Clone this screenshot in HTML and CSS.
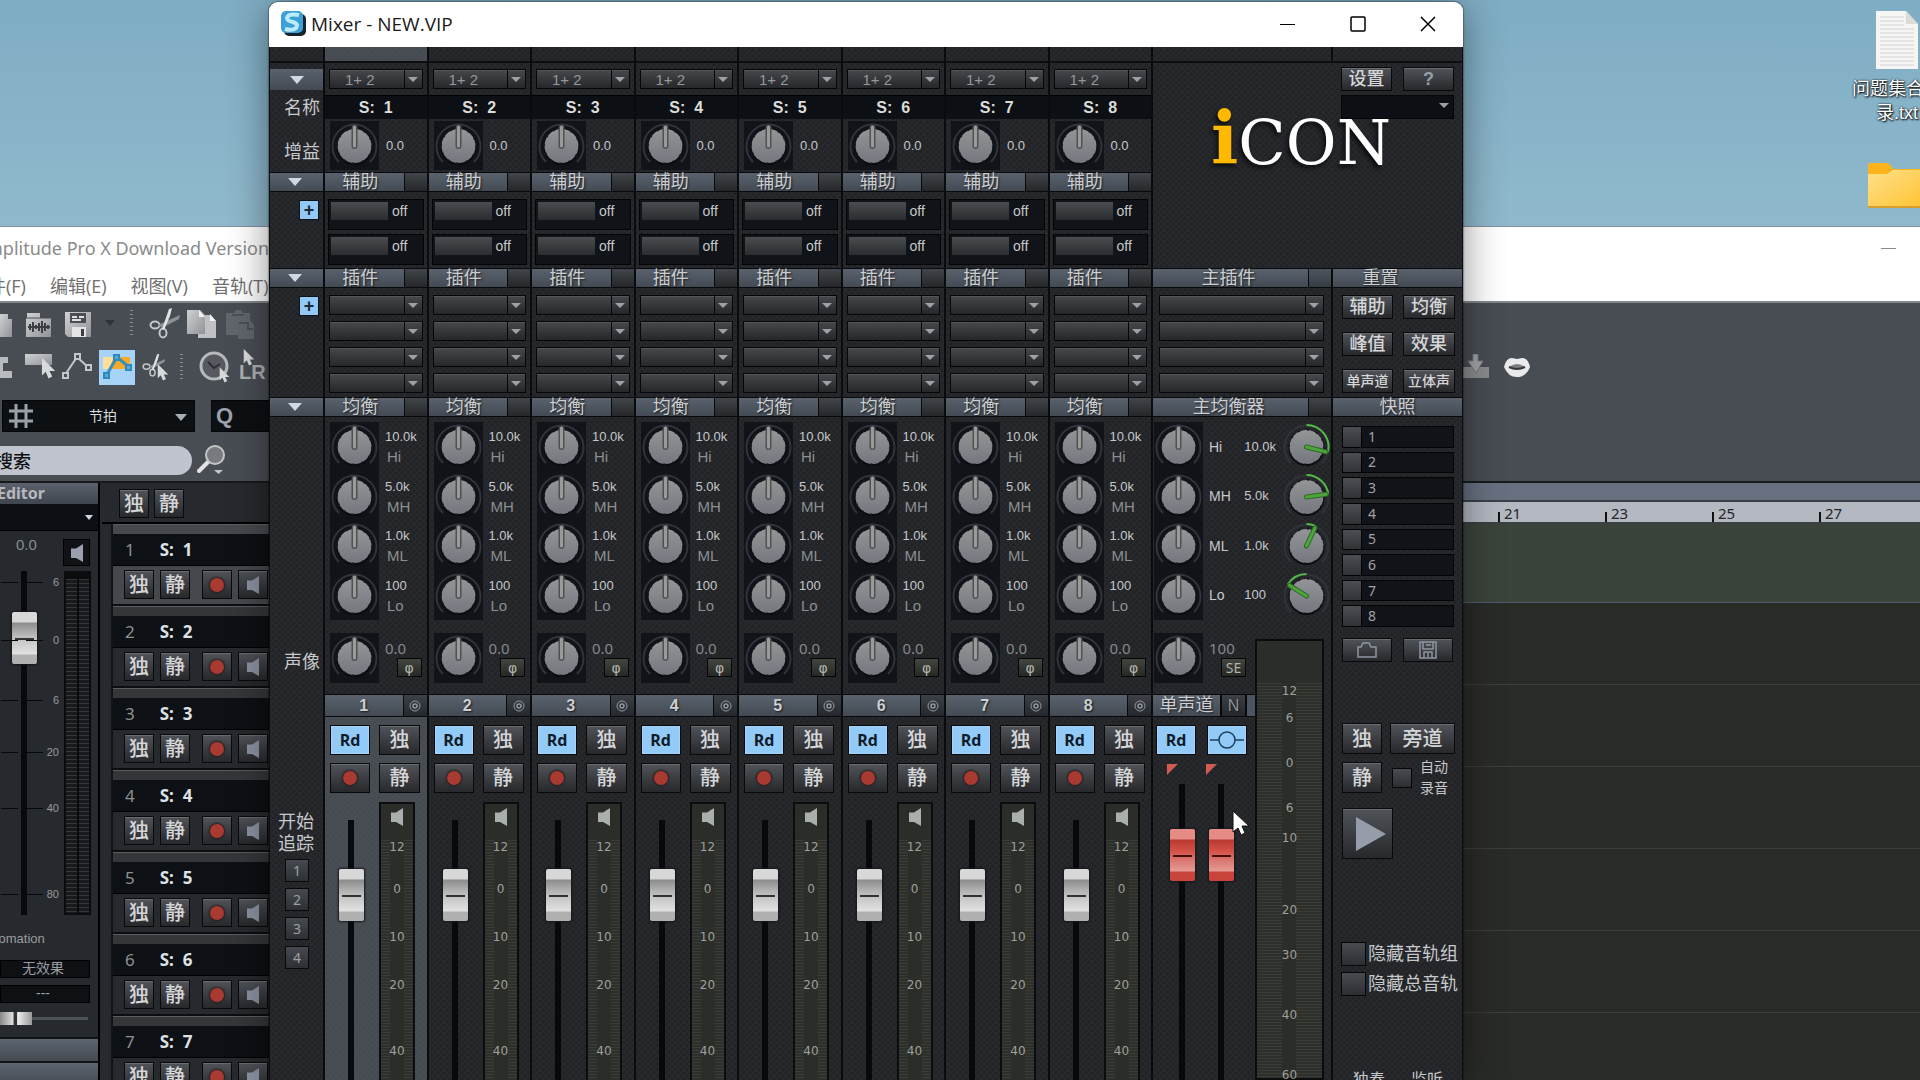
FILE: index.html
```
<!DOCTYPE html>
<html lang="zh-CN">
<head>
    <meta charset="UTF-8">
    <meta name="viewport" content="width=device-width, initial-scale=1.0">
    <title>Mixer - NEW.VIP</title>
    <link rel="stylesheet" href="styles.css">
</head>
<body>

<!-- Shared icons -->
<svg class="defs" width="0" height="0" aria-hidden="true">
    <defs>
        <linearGradient id="knobFace" x1="0" y1="0" x2="0" y2="1">
            <stop offset="0" stop-color="#939597"/>
            <stop offset="1" stop-color="#74777e"/>
        </linearGradient>
        <linearGradient id="metal" x1="0" y1="0" x2="1" y2="1">
            <stop offset="0" stop-color="#d0d1d3"/>
            <stop offset="1" stop-color="#8f9296"/>
        </linearGradient>
        <linearGradient id="gold" x1="0" y1="0" x2="1" y2="1">
            <stop offset="0" stop-color="#ffe08c"/>
            <stop offset="1" stop-color="#ffc22e"/>
        </linearGradient>
    </defs>
    <symbol id="knob" viewBox="0 0 49 49">
        <path d="M9 41A22 22 0 1 1 40 41" fill="none" stroke="#30343a" stroke-width="2"/>
        <circle cx="24.5" cy="26" r="18" fill="#090b0e"/>
        <circle cx="24.5" cy="25" r="17" fill="url(#knobFace)"/>
        <circle cx="24.5" cy="25" r="17.5" fill="none" stroke="#15181c" stroke-width="2" stroke-dasharray="2 7.16"/>
    </symbol>
    <symbol id="needle" viewBox="0 0 49 49">
        <path d="M24.5 7V25" stroke="#4f5052" stroke-width="6" stroke-linecap="round"/>
        <path d="M24.5 6V25" stroke="#9a9a98" stroke-width="3" stroke-linecap="round"/>
    </symbol>
    <symbol id="speaker" viewBox="0 0 14 20">
        <path d="M1 5.500H6L13 1V19L6 15H1Z" fill="currentColor"/>
    </symbol>
    <symbol id="scissors" viewBox="0 0 32 32">
        <g fill="none" stroke="#c4c6c9" stroke-width="2">
            <ellipse cx="6" cy="18" rx="4.500" ry="3.500"/>
            <ellipse cx="14" cy="26" rx="3.500" ry="4.500"/>
        </g>
        <path d="M9 18L31 8L30 12L13 21Z" fill="#8d9094"/>
        <path d="M13 22L20 2L23 1L21 9L15 23Z" fill="#e2e3e4"/>
    </symbol>
    <symbol id="arrow" viewBox="0 0 16 24">
        <path d="M1 0V19L5 15L8 22L12 20L9 14H15Z" fill="#d8d9da"/>
    </symbol>
</svg>

<!-- Desktop icons -->
<div class="desktop-icons">
    <div class="desktop-icon">
        <svg width="42" height="58" viewBox="0 0 42 58">
            <path d="M0 0H30L42 13V58H0Z" fill="#f5f5f4"/>
            <path d="M30 0V13H42Z" fill="#dcdcd6"/>
            <path d="M4 6H28M4 10H28M4 14H28M4 18H38M4 22H38M4 26H38M4 30H38M4 34H38M4 38H38M4 42H38M4 46H38M4 50H38M4 54H38" stroke="#d2d3d5"/>
        </svg>
        <span>问题集合目<br>录.txt</span>
    </div>
    <div class="desktop-icon">
        <svg width="58" height="46" viewBox="0 0 58 46">
            <path d="M0 3Q0 0 3 0H18Q22 0 25 6H58V20H0Z" fill="#fbb41c"/>
            <path d="M0 11H19L25 7H58V43Q58 45 55 45H3Q0 45 0 42Z" fill="url(#gold)"/>
            <path d="M0 44H58" stroke="#d99f2c" stroke-width="2"/>
        </svg>
    </div>
</div>

<!-- Main program window behind the mixer -->
<div class="app">
    <div class="app-title">
        <span>Samplitude Pro X Download Version</span>
        <button class="app-min" aria-label="Minimize"></button>
    </div>
    <nav class="app-menu">
        <a href="#">文件(F)</a><a href="#">编辑(E)</a><a href="#">视图(V)</a><a href="#">音轨(T)</a>
    </nav>

    <div class="toolbars">
        <div class="tool-row file-row">
            <svg class="t-cut" viewBox="0 0 12 36"><path d="M0 9H8V14H12V32H0Z" fill="url(#metal)"/></svg>
            <svg class="t-wave" width="26" height="36" viewBox="0 0 26 36">
                <path d="M2 8H15V13H26V32H1V13H2Z" fill="url(#metal)"/><path d="M1 13H26" stroke="#4b4f55"/>
                <path d="M3 22H25M5 19V25M8 17V27M11 20V24M14 18V26M17 16V28M20 18V26M23 20V24" stroke="#3a3d42" stroke-width="2"/>
            </svg>
            <svg class="t-save" width="26" height="36" viewBox="0 0 26 36">
                <path d="M0 7H26V32H3L0 29Z" fill="url(#metal)"/><path d="M5 8H21V18H5Z" fill="#4a4e54"/>
                <path d="M7 12H12M14 12H19M7 15H16" stroke="#e0e0e0" stroke-width="2"/>
                <path d="M7 22H21V32H7Z" fill="#e4e4e6"/><path d="M16 24H19V31H16Z" fill="#3b3e43"/>
            </svg>
            <svg class="t-caret" width="10" height="6" viewBox="0 0 10 6"><path d="M0 0H10L5 6Z" fill="#2e3136"/></svg>
            <i class="t-sep"></i>
            <svg class="t-scissors" width="32" height="32"><use href="#scissors"/></svg>
            <svg class="t-copy" width="30" height="36" viewBox="0 0 30 36">
                <path d="M0 5H13L18 10V29H0Z" fill="url(#metal)"/><path d="M12 10H23L29 16V33H11V29H18V10Z" fill="#bfc1c4"/>
                <path d="M12 5L18 12H12ZM23 9L29 16H23Z" fill="#f2f2f2"/>
            </svg>
            <svg width="28" height="36" viewBox="0 0 28 36"><path d="M0 8H8L10 5H15L17 8H24V15L28 20V34H12V30H0Z" fill="#62666c"/><path d="M6 10H18M13 18H22V24H27" fill="none" stroke="#4c5056" stroke-width="2"/></svg>
        </div>
        <div class="tool-row">
            <svg class="t-cut" viewBox="0 0 12 36"><path d="M0 8H8V14H0ZM0 22H12V29H0ZM0 14H3V22H0Z" fill="#b9bbbe"/></svg>
            <svg class="t-object" width="30" height="36" viewBox="0 0 30 36"><path d="M0 5H27V16H0Z" fill="url(#metal)"/><use href="#arrow" x="16" y="8" width="15" height="24"/></svg>
            <svg class="t-curve" width="30" height="36" viewBox="0 0 30 36"><path d="M3 26L15 8L27 19" fill="none" stroke="#c4c6c9" stroke-width="2"/><path d="M1 24H6V29H1ZM13 5H18V10H13ZM24 16H29V21H24Z" fill="#494e55" stroke="#c4c6c9" stroke-width="2"/></svg>
            <button class="t-active" aria-label="Object curve">
                <svg width="32" height="32" viewBox="0 0 32 32"><path d="M2 5H29V17H2Z" fill="#f7a92a"/><path d="M2 5H13L8 17H2Z" fill="#ffdfa0"/><path d="M5 24L16 5L29 16" fill="none" stroke="#3590bd" stroke-width="3"/><path d="M3 21H8V26H3ZM13 3H18V8H13ZM25 13H30V18H25Z" fill="#59acd8" stroke="#3089b8" stroke-width="2"/></svg>
            </button>
            <svg class="t-snip" width="28" height="36" viewBox="0 0 28 36"><use href="#scissors" y="3" width="24" height="26"/><use href="#arrow" x="15" y="15" width="12" height="18"/></svg>
            <i class="t-sep"></i>
            <svg class="t-clock" width="32" height="36" viewBox="0 0 32 36"><circle cx="15" cy="17" r="13" fill="#565a60" stroke="#b7b9bc" stroke-width="3"/><path d="M9 13L15 19L21 15" fill="none" stroke="#2b2e32" stroke-width="2"/><use href="#arrow" x="20" y="18" width="11" height="17"/></svg>
            <span class="t-lr">LR<svg width="12" height="20"><use href="#arrow"/></svg></span>
            <span class="t-right">
                <svg width="28" height="26" viewBox="0 0 28 26"><path d="M0 13H27V24H0Z" fill="#8c8d90"/><path d="M11 0H16V7H21L14 19L6 7H11Z" fill="#a3a4a7" stroke="#77797c"/></svg>
                <svg width="28" height="22" viewBox="0 0 28 22"><path d="M1 11Q3 2 9 2L14 3L19 2Q25 2 27 11Q23 21 14 21Q5 21 1 11Z" fill="#e9eaeb"/><path d="M6 11Q14 5 22 11Q14 15 6 11Z" fill="#7b7e80"/><path d="M6 11Q14 15 22 11" fill="none" stroke="#33363a" stroke-width="2"/></svg>
            </span>
        </div>
        <div class="grid-row">
            <label class="snap">
                <svg width="24" height="24" viewBox="0 0 24 24"><path d="M7 0V24M17 0V24M0 7H24M0 17H24" stroke="#9ba0ab" stroke-width="3"/></svg>
                <select><option>节拍</option></select>
            </label>
            <label class="snap quant">Q</label>
        </div>
        <div class="search-row">
            <input class="search" type="text" value="搜索" aria-label="搜索">
            <svg width="30" height="30" viewBox="0 0 30 30"><path d="M3 26L14 15" stroke="#e2e2e2" stroke-width="4" stroke-linecap="round"/><circle cx="19" cy="10" r="9" fill="#777b80" stroke="#c5c5c5" stroke-width="2"/><path d="M18 25H27L22.500 29Z" fill="#c5c7ca"/></svg>
        </div>
    </div>

    <div class="workspace">
        <aside class="editor">
            <h2>Editor</h2>
            <div class="editor-target"><i class="tri"></i></div>
            <div class="editor-level">
                <span class="editor-val">0.0</span>
                <button class="spk" aria-label="Speaker"><svg width="14" height="20"><use href="#speaker"/></svg></button>
            </div>
            <div class="editor-fader">
                <input class="fader" type="range" value="86" aria-label="Editor volume">
                <div class="editor-scale" id="editorScale"></div>
                <div class="editor-meter"></div>
            </div>
            <p class="automation">Automation</p>
            <div class="fx-box">无效果</div>
            <div class="fx-box">---</div>
            <input class="hslider" type="range" value="42" aria-label="Editor pan">
            <div class="fold"></div>
            <div class="fold"></div>
        </aside>

        <section class="tracks">
            <div class="tracks-head">
                <button class="btn">独</button><button class="btn">静</button>
            </div>
            <div id="trackList"></div>
        </section>

        <section class="arrange">
            <div class="range-bar"></div>
            <div class="ruler"><span>21</span><span>23</span><span>25</span><span>27</span></div>
            <div class="lanes"><i></i><i></i><i></i><i></i><i></i><i></i><i></i></div>
        </section>
    </div>
</div>

<!-- Mixer window -->
<div class="mixer">
    <header class="mixer-title">
        <svg width="25" height="25" viewBox="0 0 25 25">
            <rect x="3" y="3" width="22" height="22" rx="5" fill="#15242f"/>
            <rect width="22" height="22" rx="5" fill="#3d9fd6"/>
            <path d="M18 4Q7 2 6 7Q6 10 12 11Q18 13 15 17Q12 20 4 18" fill="none" stroke="#b9ecff" stroke-width="4"/>
        </svg>
        <h1>Mixer - NEW.VIP</h1>
        <button aria-label="Minimize"><svg width="16" height="16"><path d="M0 8.500H15" stroke="#000"/></svg></button>
        <button aria-label="Maximize"><svg width="16" height="16"><rect x="1" y="1" width="14" height="14" rx="1" fill="none" stroke="#000" stroke-width="1.500"/></svg></button>
        <button aria-label="Close"><svg width="16" height="16"><path d="M1 1L15 15M15 1L1 15" stroke="#000" stroke-width="1.500"/></svg></button>
    </header>

    <div class="mixer-body">
        <!-- Row labels -->
        <div class="col labels">
            <div class="r-top"></div>
            <div class="r-out"><div class="fold-bar"><i class="tri"></i></div></div>
            <div class="r-label">名称</div>
            <div class="r-label gain-label">增益</div>
            <div class="head"><div class="head-main"><i class="tri"></i></div></div>
            <div class="r-aux"><button class="plus">+</button></div>
            <div class="head"><div class="head-main"><i class="tri"></i></div></div>
            <div class="r-plug"><button class="plus">+</button></div>
            <div class="head"><div class="head-main"><i class="tri"></i></div></div>
            <div class="r-eq"></div>
            <div class="r-pan">声像</div>
            <div class="recall">
                <p>开始<br>追踪</p>
                <button>1</button><button>2</button><button>3</button><button>4</button>
            </div>
        </div>

        <div class="strips" id="strips"></div>

        <!-- Master and right hand side -->
        <div class="master-side">
            <div class="r-top split"><div></div><div></div></div>
            <div class="brand">
                <div class="logo"><b>i</b><span>CON</span></div>
                <div class="brand-tools">
                    <button class="btn">设置</button><button class="btn help">?</button>
                    <div class="dropdown dark"><select aria-label="Preset"><option></option></select></div>
                </div>
            </div>
            <div class="master-cols">
                <div class="col master">
                    <div class="head"><div class="head-main">主插件</div><div class="head-end blue"></div></div>
                    <div class="r-plug" id="masterPlug"></div>
                    <div class="head"><div class="head-main">主均衡器</div><div class="head-end"></div></div>
                    <div class="r-eq" id="masterEq"></div>
                    <div class="master-lower">
                        <div class="master-left">
                            <div class="r-pan">
                                <div class="knob-box"><svg width="49" height="49"><use href="#knob"/><use href="#needle"/></svg></div>
                                <div class="pan-side"><span>100</span><button class="mini">SE</button></div>
                            </div>
                            <div class="head num"><div class="head-main">单声道</div><div class="head-n">N</div><div class="head-rest"></div></div>
                            <div class="master-btns">
                                <button class="btn rd">Rd</button>
                                <button class="btn rd" aria-label="Link"><svg width="36" height="20" viewBox="0 0 36 20"><path d="M1 10H10M26 10H35" stroke="#1d3f5c" stroke-width="1.500"/><circle cx="18" cy="10" r="8" fill="none" stroke="#1d3f5c" stroke-width="1.500"/></svg></button>
                            </div>
                            <div class="clips"><i></i><i></i></div>
                            <div class="master-faders">
                                <input class="fader red" type="range" value="87" aria-label="Master left">
                                <input class="fader red" type="range" value="87" aria-label="Master right">
                            </div>
                        </div>
                        <div class="meter master-meter" id="masterMeter"></div>
                    </div>
                </div>

                <div class="col side">
                    <div class="head reset-head"><div class="head-main">重置</div></div>
                    <div class="r-plug reset">
                        <button class="btn">辅助</button><button class="btn">均衡</button>
                        <button class="btn">峰值</button><button class="btn">效果</button>
                        <button class="btn small">单声道</button><button class="btn small">立体声</button>
                    </div>
                    <div class="head"><div class="head-main">快照</div></div>
                    <div class="r-eq snaps" id="snaps"></div>
                    <div class="files">
                        <button class="btn" aria-label="Open"><svg width="20" height="16" viewBox="0 0 20 16"><path d="M1 15V5H4L6 1H12L14 5H19V15Z" fill="none" stroke="#8f96a3" stroke-width="1.500"/></svg></button>
                        <button class="btn" aria-label="Save"><svg width="18" height="18" viewBox="0 0 18 18"><path d="M1 1H17V17H1ZM4 1V8H14V1M5 17V11H13V17M7 4H12M9 12V16" fill="none" stroke="#8f96a3" stroke-width="1.500"/></svg></button>
                    </div>
                    <div class="solo-box">
                        <button class="btn">独</button><button class="btn">旁道</button>
                        <button class="btn">静</button>
                        <label class="auto"><input type="checkbox"><span>自动<br>录音</span></label>
                    </div>
                    <button class="btn play" aria-label="Play"><svg width="30" height="34"><path d="M0 0L30 17L0 34Z" fill="#969ca9"/></svg></button>
                    <div class="hides">
                        <label><input type="checkbox"><span>隐藏音轨组</span></label>
                        <label><input type="checkbox"><span>隐藏总音轨</span></label>
                    </div>
                    <div class="monitor"><span>独奏</span><span>监听</span></div>
                </div>
            </div>
        </div>
    </div>
</div>

<svg class="cursor" width="17" height="26" viewBox="0 0 17 26"><path d="M1 1V22L6 18L9 25L13 23L10 16H17Z" fill="#fff" stroke="#111"/></svg>

<script src="script.js"></script>
</body>
</html>
```
FILE: styles.css
```
* {
    box-sizing: border-box;
}

body {
    margin: 0;
    height: 100vh;
    overflow: hidden;
    position: relative;
    background: linear-gradient(#7fadc4, #90b9cc 230px);
    font-family: "Liberation Sans", "Noto Sans CJK SC", sans-serif;
    color: #c6c8ca;
}

h1, h2, p {
    margin: 0;
    font-weight: normal;
}

button, select, input {
    font-family: inherit;
    margin: 0;
    padding: 0;
    border: none;
    color: inherit;
}

a {
    color: inherit;
    text-decoration: none;
}

svg {
    display: block;
    flex: none;
}

.defs {
    position: absolute;
}

/* Desktop */
.desktop-icons {
    position: absolute;
    top: 11px;
    right: -26px;
    width: 98px;
    display: flex;
    flex-direction: column;
    gap: 38px;
}

.desktop-icon {
    display: flex;
    flex-direction: column;
    align-items: center;
    gap: 8px;
    color: #fff;
    font-size: 18px;
    line-height: 24px;
    text-align: center;
    white-space: nowrap;
    text-shadow: 1px 1px 2px #000, 0 0 2px #000;
}

/* Main program window */
.app {
    position: absolute;
    top: 226px;
    left: -100px;
    right: 0;
    bottom: 0;
    display: flex;
    flex-direction: column;
    background: #26292d;
    border-top: 1px solid #82929b;
    overflow: hidden;
}

.app-title {
    height: 42px;
    padding: 0 24px 0 66px;
    display: flex;
    align-items: center;
    justify-content: space-between;
    background: #fff;
    color: #8b8b8b;
    font-family: "Noto Sans", sans-serif;
    font-size: 18px;
}

.app-min {
    width: 15px;
    height: 1px;
    background: #8b8b8b;
}

.app-menu {
    height: 34px;
    padding-left: 70px;
    display: flex;
    gap: 24px;
    align-items: center;
    background: #fff;
    border-bottom: 2px solid #85888a;
    color: #6f6f6f;
    font-family: "Open Sans", "Noto Sans CJK SC", sans-serif;
    font-size: 18px;
}

.toolbars {
    height: 180px;
    padding-left: 100px;
    background: #484d54;
    border-bottom: 2px solid #17191c;
}

.tool-row {
    height: 48px;
    display: flex;
    align-items: center;
}

.tool-row.file-row {
    height: 40px;
}

.t-cut {
    width: 12px;
    height: 36px;
    margin-right: 13px;
}

.t-wave, .t-save {
    margin-right: 14px;
}

.t-caret {
    margin-right: 14px;
}

.t-sep {
    width: 3px;
    height: 26px;
    margin: 0 16px 0 1px;
    background: repeating-linear-gradient(#8b8e92 0 1px, transparent 1px 4px);
}

.t-scissors {
    margin-right: 6px;
}

.t-copy {
    margin-right: 9px;
}

.t-object, .t-curve {
    margin-right: 7px;
}

.t-active {
    width: 36px;
    height: 35px;
    margin-right: 7px;
    padding: 2px;
    background: #a6d3f7;
}

.t-snip {
    margin-right: 9px;
}

.t-clock {
    margin-right: 8px;
}

.t-lr {
    position: relative;
    padding-top: 10px;
    font: bold 20px/28px "Liberation Sans", sans-serif;
    color: #aeb0b3;
}

.t-lr svg {
    position: absolute;
    top: 0;
    left: 4px;
}

.t-right {
    margin-left: auto;
    margin-right: 389px;
    display: flex;
    align-items: center;
    gap: 13px;
}

.grid-row {
    display: flex;
    gap: 16px;
    margin: 9px 0 13px 2px;
}

.snap {
    width: 193px;
    height: 32px;
    padding-left: 6px;
    display: flex;
    align-items: center;
    position: relative;
    background: #0d1013;
    border: 1px solid #050607;
}

.snap::after {
    content: '';
    position: absolute;
    right: 7px;
    top: 13px;
    border: 6px solid transparent;
    border-top: 7px solid #a9adb5;
    border-bottom: 0;
}

.snap select {
    appearance: none;
    flex: 1;
    background: none;
    padding-left: 56px;
    font-size: 14px;
    color: #d8dadc;
}

.quant {
    padding-left: 4px;
    font-size: 22px;
    font-weight: bold;
    color: #9ba0ab;
}

.quant::after {
    display: none;
}

.search-row {
    display: flex;
    align-items: center;
    gap: 4px;
}

.search {
    width: 212px;
    height: 29px;
    margin-left: -20px;
    padding-left: 15px;
    border-radius: 15px;
    background: #bfc4ce;
    color: #111;
    font-size: 18px;
    font-weight: 500;
}

.workspace {
    flex: 1;
    min-height: 0;
    display: flex;
    padding-left: 100px;
}

/* Editor column */
.editor {
    width: 99px;
    flex: none;
    overflow: hidden;
    border-right: 1px solid #000;
    background: #26292d;
}

.editor h2 {
    height: 21px;
    margin-left: -3px;
    font: bold 16px/20px "Noto Sans", sans-serif;
    color: #b6b9be;
    background: linear-gradient(#5b626d, #3f454d);
}

.editor-target {
    height: 27px;
    display: flex;
    justify-content: flex-end;
    align-items: center;
    padding-right: 5px;
    background: #0c0f13;
    border-bottom: 1px solid #000;
}

.tri {
    border: 7px solid transparent;
    border-top: 8px solid #d0d8e4;
    border-bottom: 0;
}

.editor-target .tri {
    border-width: 5px 4px 0;
}

.editor-level {
    display: flex;
    justify-content: space-between;
    margin: 8px 8px 5px 16px;
    font-size: 15px;
    line-height: 12px;
    color: #8a8d90;
}

.spk {
    width: 27px;
    height: 27px;
    display: flex;
    align-items: center;
    justify-content: center;
    background: #101215;
    border: 1px solid #000;
    color: #9aa0ad;
}

.editor-fader {
    display: flex;
    height: 344px;
    padding-left: 12px;
}

.editor-fader .fader {
    height: 344px;
}

.editor-scale {
    position: relative;
    width: 27px;
    font-size: 11px;
    line-height: 14px;
    text-align: right;
    color: #9a9da0;
}

.editor-scale span {
    position: absolute;
    right: 5px;
}

.editor-scale span::before {
    content: '';
    position: absolute;
    right: 16px;
    top: 7px;
    width: 42px;
    height: 1px;
    background: linear-gradient(90deg, #07080a 0 17px, transparent 17px 25px, #07080a 25px);
}

.editor-meter {
    width: 27px;
    border: 2px solid #0a0c0e;
    border-top-width: 8px;
    background: linear-gradient(90deg, transparent 11px, #0a0c0e 11px 13px, transparent 13px), repeating-linear-gradient(#33373a 0 1px, #181b1e 1px 4px);
}

.automation {
    margin: 14px 0 11px -21px;
    font-size: 13px;
    line-height: 20px;
    color: #9a9da0;
}

.fx-box {
    height: 18px;
    margin: 0 8px 7px 0;
    padding-right: 4px;
    line-height: 15px;
    font-size: 14px;
    text-align: center;
    background: #0e1114;
    border: 1px solid #000;
    color: #9a9da0;
}

.hslider {
    appearance: none;
    display: block;
    width: 128px;
    height: 13px;
    margin: 9px 0 12px -40px;
    background: linear-gradient(transparent 5px, #4e5359 5px 8px, transparent 8px);
}

.hslider::-webkit-slider-thumb {
    appearance: none;
    width: 32px;
    height: 13px;
    background: linear-gradient(90deg, #888, #ddd 40%, #333 45% 52%, #eee 55%, #999);
}

.fold {
    height: 24px;
    background: linear-gradient(#5d6671, #434950);
    border-top: 2px solid #101214;
}

/* Track list */
.tracks {
    width: 170px;
    flex: none;
    padding-left: 2px;
    background: #26292d;
    border-left: 1px solid #000;
}

.tracks-head {
    height: 41px;
    display: flex;
    gap: 5px;
    padding: 6px 0 0 17px;
    border-bottom: 2px solid #000;
}

.btn {
    display: flex;
    align-items: center;
    justify-content: center;
    background: linear-gradient(#505358, #26282b);
    border: 1px solid #07090b;
    box-shadow: inset 0 1px #6a6d70;
    color: #d5d6d7;
    font-size: 20px;
    font-weight: 500;
    line-height: 20px;
}

.tracks .btn {
    width: 30px;
    height: 29px;
}

.track {
    height: 82px;
    margin-left: 9px;
    border-left: 2px solid #101214;
    border-bottom: 2px solid #0c0d0f;
    background: #26292d;
}

.track-band {
    height: 10px;
    background: #34373a;
    border-top: 1px solid #5a5d60;
}

.track-name {
    height: 32px;
    display: flex;
    align-items: center;
    padding-left: 12px;
    background: #0d1014;
    border-bottom: 1px solid #000;
    font: 17px "Noto Sans", sans-serif;
    color: #8c9290;
}

.track-name b {
    margin-left: 25px;
    color: #dfe1e3;
}

.track-btns {
    display: flex;
    gap: 6px;
    height: 38px;
    padding: 4px 0 0 11px;
}

.track-btns .rec {
    margin-left: 6px;
}

.track.on .track-band, .track.on .track-btns {
    background: #45494e;
}

.rec::before {
    content: '';
    width: 14px;
    height: 14px;
    border-radius: 50%;
    background: #a83a31;
    box-shadow: 0 0 2px 1px #2a1c1c;
}

.tracks .spk-btn {
    color: #8b93a1;
}

/* Arranger */
.arrange {
    flex: 1;
    display: flex;
    flex-direction: column;
}

.range-bar {
    height: 19px;
    flex: none;
    background: #687080;
    border-bottom: 2px solid #3c4148;
}

.ruler {
    height: 22px;
    flex: none;
    display: flex;
    padding-left: 1229px;
    background: #b3b8c1;
    border-bottom: 2px solid #3a3f44;
    font: 15px/22px "Noto Sans", sans-serif;
    color: #23262a;
}

.ruler span {
    width: 107px;
    flex: none;
    padding-left: 6px;
    background: linear-gradient(#111, #111) 0 100% / 2px 10px no-repeat;
}

.lanes i {
    display: block;
    height: 82px;
    background: #292b27;
    border-bottom: 1px solid #3a3d38;
}

.lanes i:first-child {
    height: 79px;
    background: #3b443b;
    border-bottom-color: #4c5d6c;
}

/* Mixer window */
.mixer {
    position: absolute;
    top: 2px;
    left: 269px;
    right: 457px;
    bottom: 0;
    display: flex;
    flex-direction: column;
    border-radius: 9px 9px 0 0;
    overflow: hidden;
    box-shadow: 0 0 2px #000, 0 6px 40px rgba(0, 0, 0, 0.45);
}

.mixer-title {
    height: 45px;
    flex: none;
    display: flex;
    align-items: center;
    padding: 0 0 2px 12px;
    background: #fff;
    color: #1a1a1a;
}

.mixer-title h1 {
    flex: 1;
    margin-left: 5px;
    font: 19px/24px "Open Sans", sans-serif;
}

.mixer-title button {
    width: 70px;
    display: flex;
    justify-content: center;
    background: none;
}

.mixer-body {
    flex: 1;
    min-height: 0;
    display: flex;
    border: solid #0c0e10;
    border-width: 0 1px;
    background-color: #27292d;
    background-image: radial-gradient(#202226 1px, transparent 2px), radial-gradient(#202226 1px, transparent 2px);
    background-size: 6px 6px;
    background-position: 0 0, 3px 3px;
}

.col {
    display: flex;
    flex-direction: column;
    min-width: 0;
}

.labels {
    width: 53px;
    flex: none;
    font-size: 18px;
}

.strips {
    flex: 1;
    display: flex;
    min-width: 0;
}

.strip {
    flex: 1;
    border-left: 2px solid #090b0d;
}

/* Rows shared by every column */
.r-top {
    height: 16px;
    flex: none;
    border-bottom: 2px solid #0c0e10;
}

.r-out {
    height: 32px;
    padding: 6px 4px 0;
}

.labels .r-out {
    padding: 6px 0 0;
}

.fold-bar {
    height: 21px;
}

.r-name {
    height: 24px;
    background: #0c0f13;
    border-top: 1px solid #000;
    text-align: center;
    font: bold 16px/24px "Liberation Sans", sans-serif;
    color: #dcdddb;
}

.r-label {
    height: 24px;
    padding-right: 3px;
    text-align: right;
    line-height: 26px;
}

.gain-label {
    height: 53px;
    line-height: 66px;
}

.r-gain {
    height: 53px;
    display: flex;
    align-items: center;
    gap: 7px;
    padding-left: 5px;
    font-size: 13px;
}

.head {
    height: 20px;
    flex: none;
    display: flex;
    border: 1px solid #07090b;
    border-width: 1px 0;
    font-size: 18px;
    line-height: 18px;
    color: #ccced0;
    text-shadow: 1px 1px 2px #16191d;
}

.head-main, .fold-bar {
    flex: 1;
    display: flex;
    align-items: center;
    justify-content: center;
    background: linear-gradient(#59626d, #434a53);
    white-space: nowrap;
}

.labels .head-main {
    padding-right: 4px;
}

.strip .head-main {
    padding-right: 8px;
}

.head-end {
    width: 23px;
    border-left: 1px solid #07090b;
    background: linear-gradient(#424549, #25272a);
}

.head-end.blue {
    background: linear-gradient(#4d555f, #363c44);
}

.r-aux {
    height: 76px;
    padding: 7px 3px 0;
}

.aux {
    height: 31px;
    margin-bottom: 4px;
    padding: 2px 3px 9px 2px;
    display: flex;
    gap: 4px;
    align-items: center;
    background: #101317;
    border: 1px solid #030405;
    font-size: 14px;
}

.aux i {
    width: 57px;
    align-self: stretch;
    background: linear-gradient(#4a4d50, #2a2c2f);
}

.plus {
    display: block;
    width: 20px;
    height: 20px;
    margin-left: auto;
    background: #92c9f6;
    border: 1px solid #0c1218;
    font: bold 18px/16px "Liberation Sans", sans-serif;
    color: #1c2a35;
}

.r-plug {
    height: 109px;
    padding: 7px 4px 0;
    display: flex;
    flex-direction: column;
    gap: 6px;
}

.labels .r-plug, .labels .r-aux {
    padding: 8px 4px 0;
}

.dropdown {
    position: relative;
    height: 20px;
    border: 1px solid #050608;
    background: linear-gradient(#46494c, #25272a);
    box-shadow: inset 0 1px #54575a;
}

.dropdown select {
    appearance: none;
    display: block;
    width: 100%;
    height: 18px;
    padding-left: 15px;
    background: none;
    font-size: 15px;
    color: #94979a;
}

.dropdown::before {
    content: '';
    position: absolute;
    top: 0;
    bottom: 0;
    right: 17px;
    width: 1px;
    background: #050608;
}

.dropdown::after {
    content: '';
    position: absolute;
    top: 7px;
    right: 4px;
    border: 5px solid transparent;
    border-top-color: #9da0a4;
    border-bottom: 0;
}

.dropdown.dark {
    height: 24px;
    background: #0c0f13;
    box-shadow: none;
}

.dropdown.dark::before {
    display: none;
}

.r-eq {
    height: 210px;
    padding: 5px 0 7px 5px;
    display: flex;
    gap: 6px;
}

.knob-box {
    width: 49px;
    flex: none;
    background: #101419;
    display: flex;
    flex-direction: column;
    justify-content: space-between;
}

.eq-text {
    display: flex;
    flex-direction: column;
    flex: 1;
    font-size: 13px;
}

.eq-text div {
    flex: 1;
    padding-top: 5px;
    line-height: 20px;
}

.eq-text em {
    display: block;
    padding-left: 2px;
    font-style: normal;
    font-size: 15px;
    color: #8c8f90;
}

.r-pan {
    height: 67px;
    padding: 6px 5px 11px;
    display: flex;
    gap: 6px;
}

.labels .r-pan {
    padding: 20px 3px 0;
    justify-content: flex-end;
}

.pan-side {
    flex: 1;
    display: flex;
    flex-direction: column;
    align-items: flex-end;
    justify-content: space-between;
    padding: 5px 0 6px;
    font: 15px/20px "Noto Sans", sans-serif;
    color: #85888a;
}

.pan-side span {
    align-self: flex-start;
}

.mini {
    width: 25px;
    height: 19px;
    background: linear-gradient(#43453f, #262824);
    border: 1px solid #050608;
    font-size: 14px;
    line-height: 14px;
    color: #b1b3ad;
}

.strip .mini {
    font-family: "DejaVu Sans", sans-serif;
}

.head.num {
    height: 23px;
    line-height: 21px;
}

.strip .num .head-main {
    padding-right: 0;
    font-size: 16px;
    font-weight: bold;
}

.head-dot {
    width: 24px;
    display: flex;
    align-items: center;
    justify-content: center;
    border-left: 1px solid #07090b;
    background: linear-gradient(#3d4147, #24272b);
}

/* Fader section of a strip */
.fader-area {
    flex: 1;
    min-height: 0;
    overflow: hidden;
    padding: 8px 5px 0;
    display: grid;
    grid-template: 31px 31px 1fr / 40px 41px;
    gap: 7px 9px;
}

.fader-area .btn {
    margin-bottom: 1px;
}

.btn.rd {
    background: #92caf8;
    box-shadow: inset 0 0 2px #d6ecff;
    color: #0f1b26;
    font: bold 16px "Open Sans", sans-serif;
}

.strip.on .r-top, .strip.on .fader-area {
    background-color: rgba(112, 124, 130, 0.45);
}

.fader-slot {
    padding: 19px 0 0 9px;
}

.fader {
    appearance: none;
    display: block;
    writing-mode: vertical-lr;
    direction: rtl;
    width: 25px;
    height: 400px;
    background: linear-gradient(90deg, transparent 9px, #07090c 9px 15px, transparent 15px);
}

.fader::-webkit-slider-thumb {
    appearance: none;
    width: 25px;
    height: 52px;
    border-radius: 2px;
    background: linear-gradient(#333, #333) 3px 26px / 19px 2px no-repeat, linear-gradient(#d8d8d8 0 10px, #8c8c8c 11px, #b4b4b4 22px, #c9c9c9 30px, #e2e2e2 42px, #b0b0b0 43px 100%);
    box-shadow: 0 0 2px 1px #15171a;
}

.fader.red::-webkit-slider-thumb {
    background: linear-gradient(#43100c, #43100c) 3px 26px / 19px 2px no-repeat, linear-gradient(#e58c86 0 10px, #b93a30 11px, #d65147 22px, #d8736c 30px, #e49b95 42px, #c9443a 43px 100%);
}

.meter {
    position: relative;
    border: 2px solid #0a0c0d;
    background: linear-gradient(#2b2d29 36px, transparent 36px), linear-gradient(90deg, transparent 9px, #2b2d29 9px 23px, transparent 23px), repeating-linear-gradient(#3a3d37 0 1px, #2d2f2b 1px 3px);
    font: 12px/16px "DejaVu Sans", sans-serif;
    color: #9ea19b;
    text-align: center;
}

.fader-area .meter {
    width: 36px;
    margin-top: 1px;
}

.meter svg {
    margin: 3px auto 0;
    color: #a9b0ac;
}

.meter span {
    position: absolute;
    left: 0;
    right: 0;
}

/* Recall buttons */
.recall {
    padding: 117px 0 0 15px;
}

.recall p {
    margin: 0 0 4px -7px;
    line-height: 22px;
}

.recall button {
    display: block;
    width: 24px;
    height: 23px;
    margin-bottom: 6px;
    background: linear-gradient(#464a50, #2c2f33);
    border: 1px solid #07090b;
    font: 14px "Noto Sans", sans-serif;
    color: #9da0a5;
}

/* Master side */
.master-side {
    width: 311px;
    flex: none;
    display: flex;
    flex-direction: column;
    border-left: 2px solid #090b0d;
}

.split {
    display: flex;
}

.split div {
    width: 129px;
}

.split div:first-child {
    width: 180px;
    border-right: 2px solid #090b0d;
}

.brand {
    height: 205px;
    flex: none;
    position: relative;
    padding: 4px 8px 0 0;
}

.brand-tools {
    width: 113px;
    margin-left: auto;
    display: grid;
    grid-template: 24px 24px / 51px 51px;
    gap: 4px 11px;
}

.brand-tools .btn {
    font-size: 18px;
}

.brand-tools .help {
    font-weight: bold;
    color: #989eaa;
}

.brand-tools .dropdown {
    grid-column: span 2;
}

.logo {
    position: absolute;
    top: 31px;
    left: 58px;
    display: flex;
    align-items: baseline;
    font: 62px/90px "DejaVu Serif", serif;
    color: #fff;
    text-shadow: -2px 3px 4px #0b0c0e;
}

.logo b {
    font-size: 72px;
    color: #ffb900;
}

.master-cols {
    flex: 1;
    min-height: 0;
    display: flex;
}

.master {
    width: 180px;
    border-right: 2px solid #090b0d;
}

.master .r-plug {
    padding: 7px 7px 0 6px;
}

.master .head-main {
    padding-right: 4px;
}

.master .r-eq {
    padding-left: 1px;
}

.master .eq-text div {
    padding: 0;
    display: flex;
    align-items: center;
    font-size: 14px;
}

.master .eq-text .freq {
    font-size: 13px;
}

.master .knob-box.clear {
    background: none;
}

.master-lower {
    flex: 1;
    min-height: 0;
    display: flex;
}

.master-left {
    width: 102px;
}

.master-left .r-pan {
    padding: 6px 9px 11px 1px;
}

.master-left .head-main {
    padding: 0;
}

.head-n, .head-rest {
    width: 25px;
    border-left: 2px solid #07090b;
    background: linear-gradient(#3d4147, #24272b);
    text-align: center;
    font-size: 16px;
    color: #8d9299;
}

.head-rest {
    width: 10px;
    background: #4d5560;
}

.master-btns {
    display: flex;
    gap: 11px;
    padding: 8px 0 0 3px;
}

.master-btns .btn {
    width: 40px;
    height: 30px;
}

.clips {
    display: flex;
    gap: 28px;
    padding: 9px 0 9px 14px;
}

.clips i {
    border-top: 11px solid #d05c50;
    border-right: 11px solid transparent;
}

.master-faders {
    display: flex;
    gap: 14px;
    padding-left: 17px;
    height: 296px;
    overflow: hidden;
}

.master-meter {
    width: 69px;
    margin-top: 12px;
    background: linear-gradient(#2b2d29 42px, transparent 42px), linear-gradient(90deg, transparent 25px, #2b2d29 25px 39px, transparent 39px), repeating-linear-gradient(#3a3d37 0 1px, #2d2f2b 1px 3px);
}

/* Right hand side */
.side {
    flex: 1;
}

.side > div {
    flex: none;
}

.reset-head .head-main {
    padding-right: 34px;
}

.reset {
    display: grid;
    grid-template: 24px 24px 24px / 51px 52px;
    gap: 13px 10px;
    padding: 7px 9px 0;
}

.reset .btn {
    font-size: 18px;
}

.reset .btn.small {
    font-size: 14px;
}

.snaps {
    flex-direction: column;
    gap: 4px;
    padding: 9px 8px 0 9px;
}

.snap-row {
    flex: 1;
    display: flex;
    align-items: center;
    gap: 6px;
    background: #101318;
    border: 1px solid #030405;
    font: 14px/16px "Noto Sans", sans-serif;
    color: #a0a2a3;
}

.snap-row i {
    width: 19px;
    align-self: stretch;
    background: linear-gradient(#4b4e52, #303236);
    border-right: 1px solid #000;
}

.files {
    display: flex;
    gap: 11px;
    padding: 11px 9px 0;
}

.files .btn {
    width: 51px;
    height: 24px;
}

.solo-box {
    display: grid;
    grid-template: 31px 31px / 40px 65px;
    gap: 8px;
    padding: 61px 9px 0;
}

.auto, .hides label {
    display: flex;
    align-items: center;
    white-space: nowrap;
}

.auto {
    gap: 8px;
    padding-left: 2px;
    font-size: 14px;
    line-height: 21px;
}

input[type="checkbox"] {
    appearance: none;
    width: 20px;
    height: 20px;
    flex: none;
    background: linear-gradient(#484b50, #2c2e32);
    border: 1px solid #050608;
}

.play {
    width: 51px;
    height: 51px;
    margin: 15px 9px 0;
    padding-left: 6px;
    flex: none;
}

.hides {
    padding: 83px 0 0 8px;
    font-size: 18px;
    line-height: 24px;
}

.hides label {
    gap: 2px;
    margin-bottom: 6px;
}

.hides input[type="checkbox"] {
    width: 25px;
    height: 24px;
}

.monitor {
    display: flex;
    gap: 26px;
    padding: 66px 0 0 20px;
    font-size: 16px;
    line-height: 24px;
}

.cursor {
    position: absolute;
    top: 810px;
    left: 1232px;
}
```
FILE: script.js
```
const knob = '<svg width="49" height="49"><use href="#knob"/><use href="#needle"/></svg>';
const dropdown = (label, text) => `<div class="dropdown"><select aria-label="${label}"><option>${text}</option></select></div>`;

const bands = [['10.0k', 'Hi'], ['5.0k', 'MH'], ['1.0k', 'ML'], ['100', 'Lo']];

// Scale labels: [text, distance from the top of the meter]
const stripScale = [['12', 35], ['0', 77], ['10', 125], ['20', 173], ['40', 239]];
const masterScale = [['12', 42], ['6', 69], ['0', 114], ['6', 159], ['10', 189], ['20', 261], ['30', 306], ['40', 366], ['60', 426]];
const editorScale = [['6', 4], ['0', 62], ['6', 122], ['20', 174], ['40', 230], ['80', 316]];

function scale(marks) {
    return marks.map(([text, top]) => `<span style="top: ${top}px">${text}</span>`).join('');
}

function strip(n) {
    return `
        <div class="col strip ${n === 1 ? 'on' : ''}">
            <div class="r-top"></div>
            <div class="r-out">${dropdown('Output ' + n, '1+ 2')}</div>
            <div class="r-name">S: &nbsp;${n}</div>
            <div class="r-gain"><div class="knob-box">${knob}</div><span>0.0</span></div>
            <div class="head"><div class="head-main">辅助</div><div class="head-end"></div></div>
            <div class="r-aux"><div class="aux"><i></i>off</div><div class="aux"><i></i>off</div></div>
            <div class="head"><div class="head-main">插件</div><div class="head-end"></div></div>
            <div class="r-plug">${dropdown('Plugin ' + n, '').repeat(4)}</div>
            <div class="head"><div class="head-main">均衡</div><div class="head-end"></div></div>
            <div class="r-eq">
                <div class="knob-box">${knob.repeat(4)}</div>
                <div class="eq-text">${bands.map(([f, b]) => `<div>${f}<em>${b}</em></div>`).join('')}</div>
            </div>
            <div class="r-pan">
                <div class="knob-box">${knob}</div>
                <div class="pan-side"><span>0.0</span><button class="mini">φ</button></div>
            </div>
            <div class="head num">
                <div class="head-main">${n}</div>
                <div class="head-dot"><svg width="12" height="12"><circle cx="6" cy="6" r="5" fill="none" stroke="#9296a0"/><circle cx="6" cy="6" r="2" fill="none" stroke="#9296a0" stroke-width="1.5"/></svg></div>
            </div>
            <div class="fader-area">
                <button class="btn rd">Rd</button><button class="btn">独</button>
                <button class="btn rec" aria-label="Record"></button><button class="btn">静</button>
                <div class="fader-slot"><input class="fader" type="range" value="86" aria-label="Volume ${n}"></div>
                <div class="meter"><svg width="14" height="20"><use href="#speaker"/></svg>${scale(stripScale)}</div>
            </div>
        </div>`;
}

function track(n) {
    return `
        <div class="track ${n === 1 ? 'on' : ''}">
            <div class="track-band"></div>
            <div class="track-name">${n}<b>S: &nbsp;${n}</b></div>
            <div class="track-btns">
                <button class="btn">独</button><button class="btn">静</button>
                <button class="btn rec" aria-label="Record"></button>
                <button class="btn spk-btn" aria-label="Monitor"><svg width="14" height="20"><use href="#speaker"/></svg></button>
            </div>
        </div>`;
}

// Master frequency knob with its green value arc, angle in degrees from 12 o'clock
function freqKnob(angle) {
    const a = angle * Math.PI / 180;
    const x = 24.5 + 22 * Math.sin(a);
    const y = 25 - 22 * Math.cos(a);
    return `
        <svg width="49" height="49" viewBox="0 0 49 49">
            <use href="#knob"/>
            <path d="M24.5 3A22 22 0 0 ${angle > 0 ? 1 : 0} ${x} ${y}" fill="none" stroke="#55b848" stroke-width="2"/>
            <path d="M24.5 25V5" transform="rotate(${angle} 24.5 25)" stroke="#2c6a22" stroke-width="5" stroke-linecap="round"/>
            <path d="M24.5 25V5" transform="rotate(${angle} 24.5 25)" stroke="#4ea33c" stroke-width="3" stroke-linecap="round"/>
        </svg>`;
}

const numbers = [1, 2, 3, 4, 5, 6, 7, 8];

document.getElementById('strips').innerHTML = numbers.map(strip).join('');
document.getElementById('trackList').innerHTML = numbers.slice(0, 7).map(track).join('');
document.getElementById('snaps').innerHTML = numbers.map(n => `<div class="snap-row"><i></i>${n}</div>`).join('');
document.getElementById('masterPlug').innerHTML = dropdown('Master plugin', '').repeat(4);
document.getElementById('masterMeter').innerHTML = scale(masterScale);
document.getElementById('editorScale').innerHTML = scale(editorScale);
document.getElementById('masterEq').innerHTML = `
    <div class="knob-box">${knob.repeat(4)}</div>
    <div class="eq-text">${bands.map(b => `<div>${b[1]}</div>`).join('')}</div>
    <div class="eq-text">${bands.map(b => `<div class="freq">${b[0]}</div>`).join('')}</div>
    <div class="knob-box clear">${[104, 82, 25, -58].map(freqKnob).join('')}</div>`;
```
